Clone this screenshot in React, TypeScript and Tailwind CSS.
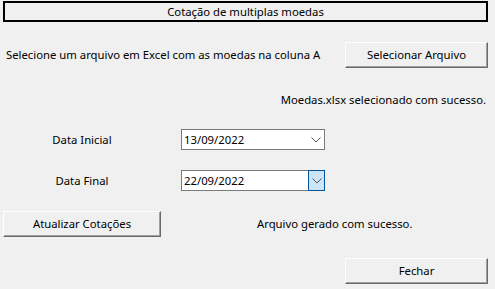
import React from "react";

const Chevron = () => (
  <svg width="10" height="6" viewBox="0 0 10 6" className="block">
    <path d="M0.5 0.5 L5 5 L9.5 0.5" fill="none" stroke="#555" strokeWidth="1" />
  </svg>
);

const WinButton = ({ label, className = "" }: { label: string; className?: string }) => (
  <div
    className={
      "flex items-center justify-center bg-[#f0f0f0] border border-t-white border-l-white border-r-[#696969] border-b-[#696969] shadow-[inset_-1px_-1px_0_#a0a0a0] " +
      className
    }
  >
    {label}
  </div>
);

const Combo = ({ value, focused = false }: { value: string; focused?: boolean }) => (
  <div className="w-[144px] h-[21px] bg-white border border-[#7a7a7a] flex items-stretch">
    <div className="flex-1 flex items-center pl-[2px]">{value}</div>
    {focused ? (
      <div className="w-[17px] -my-px -mr-px bg-[#cce4f7] border border-[#005499] flex items-center justify-center">
        <Chevron />
      </div>
    ) : (
      <div className="w-[17px] flex items-center justify-center">
        <Chevron />
      </div>
    )}
  </div>
);

export default function App() {
  return (
    <div
      className="w-[495px] h-[289px] bg-[#f0f0f0] text-black text-[11.3px] leading-none flex flex-col overflow-hidden"
      style={{ fontFamily: '"Noto Sans", sans-serif' }}
    >
      <div className="mt-[1px] ml-[3px] w-[485px] h-[21px] border-2 border-black flex items-center justify-center">
        Cotação de multiplas moedas
      </div>

      <div className="mt-[20px] h-[26px] flex items-center">
        <div className="pl-[6px]">Selecione um arquivo em Excel com as moedas na coluna A</div>
        <WinButton label="Selecionar Arquivo" className="ml-auto mr-[7px] w-[143px] h-[26px]" />
      </div>

      <div className="mt-[22px] h-[20px] flex items-center justify-end pr-[9px]">
        Moedas.xlsx selecionado com sucesso.
      </div>

      <div className="mt-[19px] h-[21px] flex items-center">
        <div className="w-[164px] text-center">Data Inicial</div>
        <div className="ml-[17px]">
          <Combo value="13/09/2022" />
        </div>
      </div>

      <div className="mt-[20px] h-[21px] flex items-center">
        <div className="w-[164px] text-center">Data Final</div>
        <div className="ml-[17px]">
          <Combo value="22/09/2022" focused />
        </div>
      </div>

      <div className="mt-[20px] h-[26px] flex items-center">
        <WinButton label="Atualizar Cotações" className="ml-[3px] w-[158px] h-[26px]" />
        <div className="ml-[96px]">Arquivo gerado com sucesso.</div>
      </div>

      <div className="mt-[21px] h-[26px] flex items-center">
        <WinButton label="Fechar" className="ml-auto mr-[7px] w-[143px] h-[26px]" />
      </div>
    </div>
  );
}
